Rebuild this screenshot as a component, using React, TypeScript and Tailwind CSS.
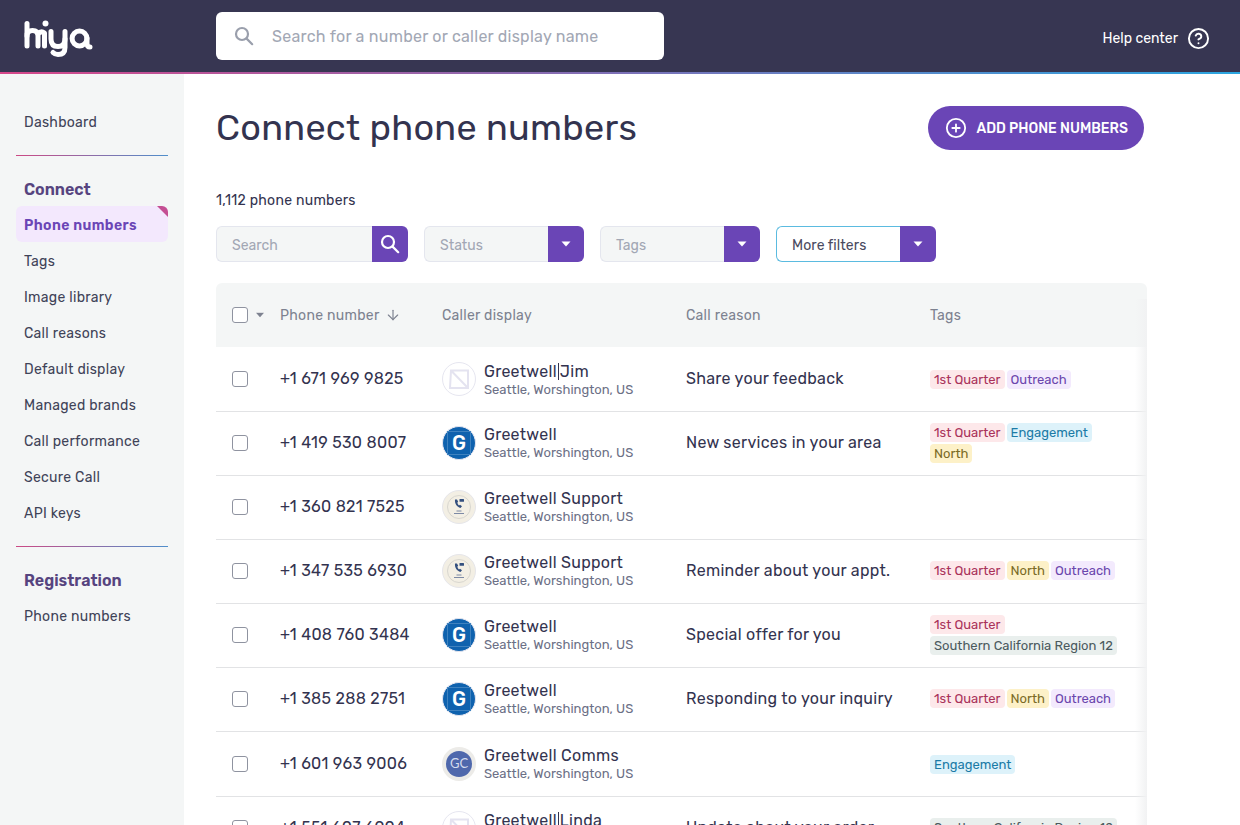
import { CirclePlus, CircleHelp, ArrowDown } from 'lucide-react';

const NAV_CONNECT = ['Tags', 'Image library', 'Call reasons', 'Default display', 'Managed brands', 'Call performance', 'Secure Call', 'API keys'];

type TagKind = 'q1' | 'outreach' | 'engagement' | 'north' | 'socal';

const TAGS: Record<TagKind, { label: string; cls: string }> = {
  q1: { label: '1st Quarter', cls: 'bg-[#fde8ea] text-[#a9325a]' },
  outreach: { label: 'Outreach', cls: 'bg-[#f3eafd] text-[#6b46ad]' },
  engagement: { label: 'Engagement', cls: 'bg-[#ddf2fa] text-[#1b7ba6]' },
  north: { label: 'North', cls: 'bg-[#fdf1c8] text-[#7a6a24]' },
  socal: { label: 'Southern California Region 12', cls: 'bg-[#e9efed] text-[#4b5a5e]' },
};

type Avatar = 'none' | 'g' | 'support' | 'gc';

const ROWS: { phone: string; name: string; avatar: Avatar; reason: string; tags: TagKind[]; tall?: boolean }[] = [
  { phone: '+1 671 969 9825', name: 'Greetwell|Jim', avatar: 'none', reason: 'Share your feedback', tags: ['q1', 'outreach'], tall: true },
  { phone: '+1 419 530 8007', name: 'Greetwell', avatar: 'g', reason: 'New services in your area', tags: ['q1', 'engagement', 'north'] },
  { phone: '+1 360 821 7525', name: 'Greetwell Support', avatar: 'support', reason: '', tags: [] },
  { phone: '+1 347 535 6930', name: 'Greetwell Support', avatar: 'support', reason: 'Reminder about your appt.', tags: ['q1', 'north', 'outreach'] },
  { phone: '+1 408 760 3484', name: 'Greetwell', avatar: 'g', reason: 'Special offer for you', tags: ['q1', 'socal'] },
  { phone: '+1 385 288 2751', name: 'Greetwell', avatar: 'g', reason: 'Responding to your inquiry', tags: ['q1', 'north', 'outreach'] },
  { phone: '+1 601 963 9006', name: 'Greetwell Comms', avatar: 'gc', reason: '', tags: ['engagement'], tall: true },
  { phone: '+1 551 607 6904', name: 'Greetwell|Linda', avatar: 'none', reason: 'Update about your order', tags: ['socal'] },
];

// viewBox uses page coordinates so the strokes can be read straight off the screenshot
function Logo() {
  return (
    <svg width="72" height="42" viewBox="22 15 72 42" fill="none" stroke="white" strokeWidth="5" strokeLinecap="round" strokeLinejoin="round" className="-ml-[2px] shrink-0">
      <path d="M27 23.5 V46" />
      <path d="M27 36 Q27 30.5 32.5 30.5 Q38 30.5 38 36 V46" />
      <path d="M38 34 Q41 30.5 44.5 33 V46" />
      <circle cx="45.5" cy="23.5" r="3" fill="white" stroke="none" />
      <path d="M51 31.5 V39 Q51 46.5 58 46.5 Q65 46.5 65 39 V31.5" />
      <path d="M65 39 V47.5 Q65 54.5 58 54.5 Q55 54.5 53 52.5" />
      <circle cx="79.5" cy="38.5" r="7.4" />
      <path d="M87 38 V43.5 Q87 47 90 47" />
    </svg>
  );
}

function SearchGlyph({ className }: { className: string }) {
  return (
    <svg width="20" height="20" viewBox="0 0 20 20" fill="none" stroke="currentColor" strokeWidth="2.2" strokeLinecap="round" className={className}>
      <circle cx="8" cy="8" r="6" />
      <path d="M12.6 12.6 L18.2 18.2" />
    </svg>
  );
}

function Caret({ className }: { className: string }) {
  return (
    <svg width="10" height="6" viewBox="0 0 10 6" className={className}>
      <path d="M0.5 0.5 H9.5 L5 5.5 Z" fill="currentColor" />
    </svg>
  );
}

function CallerAvatar({ kind }: { kind: Avatar }) {
  if (kind === 'g') {
    return (
      <div className="flex h-[34px] w-[34px] shrink-0 items-center justify-center rounded-full border border-[#e6e6f0] bg-[#0f62ae]">
        <span className="flex h-[24px] w-[24px] items-center justify-center border border-[#3f82bf] text-[20px] leading-none font-medium text-white">G</span>
      </div>
    );
  }
  if (kind === 'gc') {
    return (
      <div className="flex h-[34px] w-[34px] shrink-0 items-center justify-center rounded-full bg-[#ecebe8]">
        <span className="flex h-[26px] w-[26px] items-center justify-center rounded-full bg-[#4f68ac] font-['Lato',sans-serif] text-[13px] text-[#d5dcee]">GC</span>
      </div>
    );
  }
  if (kind === 'support') {
    return (
      <div className="flex h-[34px] w-[34px] shrink-0 items-center justify-center rounded-full border border-[#e6e6ea] bg-[#f3efe4]">
        <svg width="26" height="26" viewBox="0 0 26 26" fill="none">
          <circle cx="13" cy="13" r="11.5" stroke="#d8d6cf" />
          <path d="M9 5.5 C8.5 9.5 11 13 14.5 14 L16 12.3 L14 10.8 L13 11.5 C12 10.6 11.5 9.7 11.4 8.6 L12.2 7.8 L11 5.5 Z" fill="#34507f" />
          <rect x="13.5" y="5" width="4.5" height="2.8" rx="0.5" fill="#34507f" />
          <path d="M10.5 17 H15.5 M8 19.5 H18" stroke="#7d8aa5" strokeWidth="1" />
        </svg>
      </div>
    );
  }
  return (
    <div className="flex h-[34px] w-[34px] shrink-0 items-center justify-center rounded-full border border-[#e6e6f0] bg-white">
      <svg width="24" height="24" viewBox="0 0 24 24" fill="none" stroke="#e4e3f0" strokeWidth="2">
        <path d="M4 3.5 H21 V21 H3 Z M4 3.5 L21 21" />
      </svg>
    </div>
  );
}

function CallerName({ name }: { name: string }) {
  const [first, second] = name.split('|');
  return (
    <div className="text-[16px] leading-[20px] tracking-[0.28px] text-[#33334f]">
      {first}
      {second && <span className="mx-[1px] inline-block h-[17px] w-[1px] translate-y-[3px] bg-[#33334f]" />}
      {second}
    </div>
  );
}

function FilterSelect({ label, active }: { label: string; active?: boolean }) {
  return (
    <div className="flex h-9 w-[160px]">
      <div
        className={`flex flex-1 items-center rounded-l-md border border-r-0 pt-[2px] pl-[15px] text-[14px] ${
          active ? 'border-[#5bbbe0] bg-white tracking-[0.1px] text-[#4a4a60]' : 'border-[#e4e6ee] bg-[#f4f6f6] text-[#a2a7b4]'
        }`}
      >
        {label}
      </div>
      <div className="flex w-9 items-center justify-center rounded-r-md bg-[#6a45b6] text-white">
        <Caret className="text-white" />
      </div>
    </div>
  );
}

export default function App() {
  return (
    <div className="flex h-[825px] w-[1240px] flex-col overflow-hidden bg-white font-['Rubik','Inter',sans-serif]">
      <header className="flex h-[74px] shrink-0 flex-col">
        <div className="flex h-[72px] items-center bg-[#373652] pr-[30px] pl-[24px]">
          <div className="w-[192px]">
            <Logo />
          </div>
          <div className="flex h-12 w-[448px] items-center rounded-md bg-white pl-[18px]">
            <SearchGlyph className="text-[#9a9fac]" />
            <span className="ml-[18px] pt-[2px] text-[16px] tracking-[0.26px] text-[#a2a7b4]">Search for a number or caller display name</span>
          </div>
          <div className="ml-auto flex items-center gap-[9px] pt-[4px] text-[14px] text-white">
            Help center
            <CircleHelp size={23} strokeWidth={2} />
          </div>
        </div>
        <div className="h-[2px] bg-[linear-gradient(90deg,#d6478a,#7d71b8,#2ba6e0)]" />
      </header>

      <div className="flex min-h-0 flex-1">
        <aside className="w-[184px] shrink-0 bg-[#f4f6f6] px-4 pt-[37px]">
          <div className="h-[22px] pt-[1px] pl-2 text-[14px] leading-[22px] tracking-[0.28px] text-[#3f4358]">Dashboard</div>
          <div className="mt-[22px] h-[1px] bg-[linear-gradient(90deg,#cc4a85,#4f8fcb)]" />
          <div className="mt-[24px] pl-2 text-[16px] leading-[20px] font-semibold text-[#56447f]">Connect</div>
          <div className="relative mt-[6px] flex h-9 items-center overflow-hidden rounded-md bg-[#f3e8fd] pt-[2px] pl-2 text-[14px] font-semibold tracking-[0.4px] text-[#6a45b6]">
            Phone numbers
            <span className="absolute top-0 right-0 h-0 w-0 border-t-[11px] border-l-[11px] border-t-[#c44f93] border-l-transparent" />
          </div>
          {NAV_CONNECT.map((item) => (
            <div key={item} className="flex h-9 items-center pt-[2px] pl-2 text-[14px] tracking-[0.28px] text-[#3f4358]">
              {item}
            </div>
          ))}
          <div className="mt-[16px] h-[1px] bg-[linear-gradient(90deg,#cc4a85,#4f8fcb)]" />
          <div className="mt-[24px] pl-2 text-[16px] leading-[20px] font-semibold text-[#56447f]">Registration</div>
          <div className="mt-[7px] flex h-9 items-center pl-2 text-[14px] tracking-[0.28px] text-[#3f4358]">Phone numbers</div>
        </aside>

        <main className="min-w-0 flex-1 pt-[32px] pl-[32px]">
          <div className="flex w-[928px] items-center justify-between">
            <h1 className="text-[36px] leading-[44px] font-normal tracking-[0.28px] text-[#33334f]">Connect phone numbers</h1>
            <button className="flex h-[44px] items-center gap-[9px] rounded-full bg-[#6a45b6] pr-4 pl-[17px] text-[14px] font-medium text-white">
              <CirclePlus size={22} strokeWidth={2} />
              ADD PHONE NUMBERS
            </button>
          </div>

          <div className="mt-[41px] text-[14px] leading-[20px] tracking-[0.26px] text-[#33334f]">1,112 phone numbers</div>

          <div className="mt-[15px] flex gap-4">
            <div className="flex h-9 w-[192px]">
              <div className="flex flex-1 items-center rounded-l-md border border-r-0 border-[#e4e6ee] bg-[#f4f6f6] pt-[2px] pl-[15px] text-[14px] text-[#a2a7b4]">Search</div>
              <div className="flex w-9 items-center justify-center rounded-r-md bg-[#6a45b6] text-white">
                <SearchGlyph className="text-white" />
              </div>
            </div>
            <FilterSelect label="Status" />
            <FilterSelect label="Tags" />
            <FilterSelect label="More filters" active />
          </div>

          <div className="relative mt-[21px] w-[931px]">
            <div className="grid h-16 grid-cols-[64px_162px_244px_244px_1fr] items-center rounded-t-md bg-[#f4f6f6] text-[14px] tracking-[0.28px] text-[#7d8290]">
              <div className="flex items-center pl-4">
                <span className="h-4 w-4 rounded-[3px] border border-[#8f93a0] bg-white" />
                <Caret className="ml-[7px] scale-90 text-[#7d8290]" />
              </div>
              <div className="flex items-center gap-[5px]">
                Phone number
                <ArrowDown size={16} strokeWidth={1.75} />
              </div>
              <div>Caller display</div>
              <div>Call reason</div>
              <div>Tags</div>
            </div>

            {ROWS.map((row, i) => (
              <div key={i} className={`grid grid-cols-[64px_162px_244px_244px_1fr] items-center border-b border-[#e2e3e5] text-[#33334f] ${row.tall ? 'h-[65px]' : 'h-16 pb-[2px]'}`}>
                <div className="pl-4">
                  <span className="block h-4 w-4 rounded-[3px] border border-[#8f93a0]" />
                </div>
                <div className="text-[16px] tracking-[0.28px]">{row.phone}</div>
                <div className="flex items-center gap-2">
                  <CallerAvatar kind={row.avatar} />
                  <div>
                    <CallerName name={row.name} />
                    <div className="text-[13px] leading-[16px] text-[#6c7086]">Seattle, Worshington, US</div>
                  </div>
                </div>
                <div className="text-[16px] tracking-[0.28px]">{row.reason}</div>
                <div className="flex flex-wrap gap-x-[2px] gap-y-[2px] pr-6">
                  {row.tags.map((t) => (
                    <span key={t} className={`h-[19px] rounded-[4px] px-1 text-[13px] leading-[19px] ${TAGS[t].cls}`}>
                      {TAGS[t].label}
                    </span>
                  ))}
                </div>
              </div>
            ))}

            <div className="pointer-events-none absolute top-[16px] right-0 bottom-0 w-3 bg-gradient-to-l from-[#f1f2f3] to-transparent" />
          </div>
        </main>
      </div>
    </div>
  );
}
